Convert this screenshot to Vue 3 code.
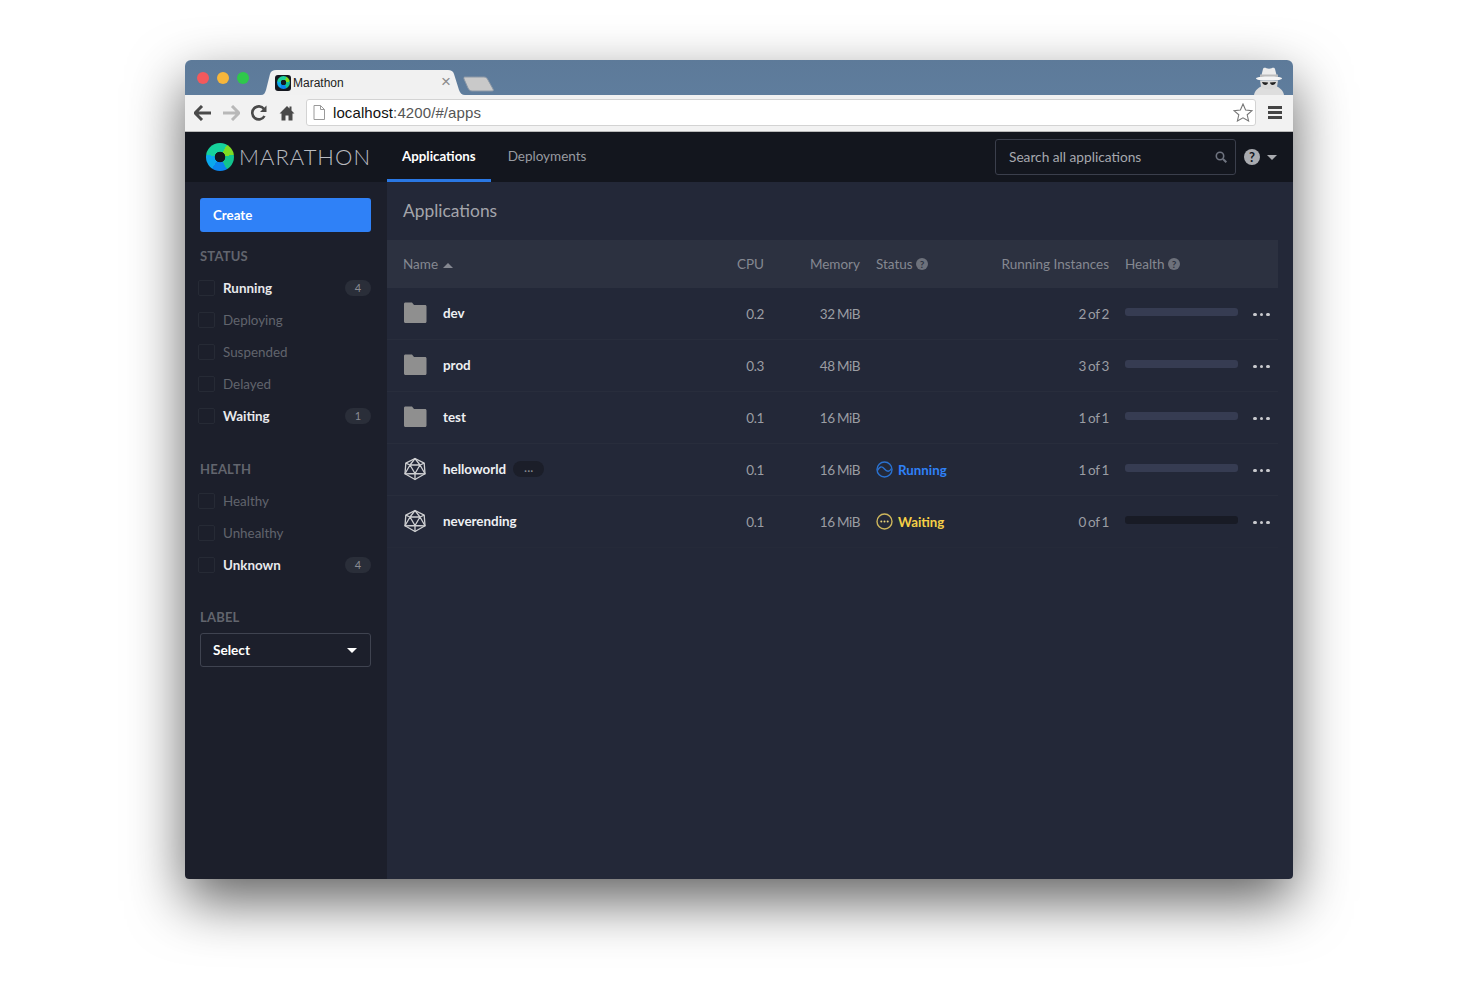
<script setup>
const statusFilters = [
  { label: 'Running', count: 4 },
  { label: 'Deploying' },
  { label: 'Suspended' },
  { label: 'Delayed' },
  { label: 'Waiting', count: 1 }
]

const healthFilters = [
  { label: 'Healthy' },
  { label: 'Unhealthy' },
  { label: 'Unknown', count: 4 }
]

const apps = [
  { name: 'dev', type: 'group', cpu: '0.2', mem: '32 MiB', running: '2 of 2', health: 'ok' },
  { name: 'prod', type: 'group', cpu: '0.3', mem: '48 MiB', running: '3 of 3', health: 'ok' },
  { name: 'test', type: 'group', cpu: '0.1', mem: '16 MiB', running: '1 of 1', health: 'ok' },
  { name: 'helloworld', type: 'app', labels: true, cpu: '0.1', mem: '16 MiB', status: 'Running', running: '1 of 1', health: 'ok' },
  { name: 'neverending', type: 'app', cpu: '0.1', mem: '16 MiB', status: 'Waiting', running: '0 of 1', health: 'none' }
]
</script>

<template>
  <div class="page">
    <div class="window">
      <!-- browser chrome -->
      <div class="tabstrip">
        <div class="lights">
          <span class="light red"></span>
          <span class="light yellow"></span>
          <span class="light green"></span>
        </div>
        <div class="tab">
          <svg class="tab-bg" width="204" height="25" viewBox="0 0 204 25">
            <path d="M0 25 C3 25 4 23 5 20 L9 4 C10 1 12 0 15 0 L187 0 C190 0 192 1 193 4 L198 20 C199 23 201 25 204 25 Z" fill="#f1f1f1" />
          </svg>
          <span class="favicon"><span class="favicon-ring"></span></span>
          <span class="tab-title">Marathon</span>
          <span class="tab-close">×</span>
        </div>
        <svg class="newtab" width="32" height="16" viewBox="0 0 32 16">
          <path d="M2 1 L21 1 C23 1 24 2 25 4 L30 13 C31 15 30 15 28 15 L9 15 C7 15 6 14 5 12 L1 3 C0.6 1.6 1 1 2 1 Z" fill="#c9c9c9" stroke="#8c98a6" stroke-width="1" />
        </svg>
        <svg class="incognito" width="32" height="30" viewBox="0 0 32 30">
          <path d="M1 30 C2 25 5 23 9 21 L23 21 C27 23 30 25 31 30 Z" fill="#dedede" />
          <path d="M8 12 L10 4 C10.4 2.4 12 2.6 13.5 3.2 C15 3.8 17 3.8 18.5 3.2 C20 2.6 21.6 2.4 22 4 L24 12 Z" fill="#ececec" />
          <path d="M7 9.5 L25 9.5 L25 12 L7 12 Z" fill="#bdbdbd" />
          <path d="M3 13 C7 11 25 11 29 13 C29 15 25 15.5 16 15.5 C7 15.5 3 15 3 13 Z" fill="#f4f4f4" />
          <path d="M7 15.5 L25 15.5 L24 22 C21 25 11 25 8 22 Z" fill="#d9d9d9" />
          <path d="M9 17 L15 17.5 C15 20.5 10 21 9 17 Z M23 17 L17 17.5 C17 20.5 22 21 23 17 Z" fill="#222" />
        </svg>
      </div>
      <div class="toolbar">
        <span class="tool"><svg width="18" height="16" viewBox="0 0 18 16"><path d="M8 1 L1 8 L8 15 M2 8 L17 8" fill="none" stroke="#4a4a4a" stroke-width="3" /></svg></span>
        <span class="tool"><svg width="18" height="16" viewBox="0 0 18 16"><path d="M10 1 L17 8 L10 15 M16 8 L1 8" fill="none" stroke="#b8b8b8" stroke-width="3" /></svg></span>
        <span class="tool"><svg width="16" height="16" viewBox="0 0 16 16"><path d="M13.5 11 A6.5 6.5 0 1 1 13 4" fill="none" stroke="#4a4a4a" stroke-width="2.6" /><path d="M15.5 0.5 L15.5 7 L9 7 Z" fill="#4a4a4a" /></svg></span>
        <span class="tool"><svg width="16" height="16" viewBox="0 0 16 16"><path d="M8 1 L0.5 8.5 L2.5 8.5 L2.5 15.5 L6.5 15.5 L6.5 10.5 L9.5 10.5 L9.5 15.5 L13.5 15.5 L13.5 8.5 L15.5 8.5 L12.5 5.5 L12.5 1.5 L10.5 1.5 L10.5 3.5 Z" fill="#4a4a4a" /></svg></span>
        <div class="omnibox">
          <svg width="12" height="15" viewBox="0 0 12 15"><path d="M1 .5 L7.5 .5 L11.5 4.5 L11.5 14.5 L1 14.5 Z M7.5 .5 L7.5 4.5 L11.5 4.5" fill="#fff" stroke="#9a9a9a" /></svg>
          <span class="url"><span class="host">localhost</span>:4200/#/apps</span>
          <svg class="star" width="20" height="19" viewBox="0 0 20 19"><path d="M10 1 L12.6 7 L19 7.6 L14.2 11.8 L15.6 18 L10 14.8 L4.4 18 L5.8 11.8 L1 7.6 L7.4 7 Z" fill="#fff" stroke="#777" stroke-width="1.1" /></svg>
        </div>
        <div class="menu-icon"><span></span><span></span><span></span></div>
      </div>

      <!-- marathon top bar -->
      <header class="topbar">
        <div class="brand">
          <span class="logo"></span>
          <span class="wordmark">MARATHON</span>
        </div>
        <nav class="nav">
          <a class="nav-item active">Applications</a>
          <a class="nav-item">Deployments</a>
        </nav>
        <div class="search">
          <span>Search all applications</span>
          <svg width="12" height="12" viewBox="0 0 12 12"><circle cx="5" cy="5" r="3.7" fill="none" stroke="#6f7480" stroke-width="1.6" /><path d="M8 8 L11.3 11.3" stroke="#6f7480" stroke-width="2" /></svg>
        </div>
        <div class="help">
          <span class="help-circle">?</span>
          <span class="caret"></span>
        </div>
      </header>

      <div class="body">
        <aside class="sidebar">
          <button class="create">Create</button>

          <h4 class="side-title">STATUS</h4>
          <ul class="filters">
            <li v-for="f in statusFilters" :key="f.label" :class="{ on: f.count }">
              <span class="check"></span>
              <span class="filter-label">{{ f.label }}</span>
              <span v-if="f.count" class="count">{{ f.count }}</span>
            </li>
          </ul>

          <h4 class="side-title health-title">HEALTH</h4>
          <ul class="filters">
            <li v-for="f in healthFilters" :key="f.label" :class="{ on: f.count }">
              <span class="check"></span>
              <span class="filter-label">{{ f.label }}</span>
              <span v-if="f.count" class="count">{{ f.count }}</span>
            </li>
          </ul>

          <h4 class="side-title label-title">LABEL</h4>
          <div class="select">
            <span>Select</span>
            <span class="select-caret"></span>
          </div>
        </aside>

        <main class="main">
          <h2 class="heading">Applications</h2>

          <div class="table">
            <div class="row head">
              <div class="name-head">Name <span class="sort"></span></div>
              <div class="num">CPU</div>
              <div class="num">Memory</div>
              <div class="status-cell">Status <span class="q">?</span></div>
              <div class="num">Running Instances</div>
              <div class="health-cell">Health <span class="q">?</span></div>
              <div></div>
            </div>

            <div v-for="app in apps" :key="app.name" class="row item">
              <div class="name">
                <svg v-if="app.type === 'group'" class="row-icon" width="24" height="21" viewBox="0 0 24 21">
                  <path d="M1 2 C1 1 1.6 .5 2.5 .5 L9 .5 L11 3 L22 3 C23 3 23.5 3.6 23.5 4.5 L23.5 19.5 C23.5 20.4 23 21 22 21 L2.5 21 C1.6 21 1 20.4 1 19.5 Z" fill="#8f8f8f" />
                </svg>
                <svg v-else class="row-icon" width="24" height="24" viewBox="0 0 24 24" fill="none" stroke="#cfd0d2" stroke-width="1.3" stroke-linejoin="round">
                  <path d="M12 1.5 L21.2 6.2 L22 16.8 L12 22.5 L2 16.8 L2.8 6.2 Z" />
                  <path d="M12 1.5 L7 8 L2.8 6.2 M12 1.5 L17 8 L21.2 6.2 M7 8 L17 8 L12 16.5 Z M7 8 L2 16.8 L12 16.5 L22 16.8 L17 8 M12 16.5 L12 22.5" />
                </svg>
                <span class="app-name">{{ app.name }}</span>
                <span v-if="app.labels" class="more-labels">...</span>
              </div>
              <div class="num value">{{ app.cpu }}</div>
              <div class="num value">{{ app.mem }}</div>
              <div class="status-cell">
                <span v-if="app.status === 'Running'" class="state running">
                  <svg width="17" height="17" viewBox="0 0 17 17" fill="none" stroke="#2a71cf" stroke-width="1.4">
                    <circle cx="8.5" cy="8.5" r="7.5" />
                    <path d="M1.5 9.5 C3.5 5 6 5 8.5 8 C11 11 13.5 11 15.5 7.5" />
                  </svg>
                  Running
                </span>
                <span v-else-if="app.status === 'Waiting'" class="state waiting">
                  <svg width="17" height="17" viewBox="0 0 17 17">
                    <circle cx="8.5" cy="8.5" r="7.5" fill="none" stroke="#cdb65c" stroke-width="1.4" />
                    <circle cx="5.3" cy="8.5" r="1" fill="#e8d27a" />
                    <circle cx="8.5" cy="8.5" r="1" fill="#e8d27a" />
                    <circle cx="11.7" cy="8.5" r="1" fill="#e8d27a" />
                  </svg>
                  Waiting
                </span>
              </div>
              <div class="num value">{{ app.running }}</div>
              <div class="health-cell">
                <div class="bar" :class="app.health"></div>
              </div>
              <div class="dots"><span></span><span></span><span></span></div>
            </div>
          </div>
        </main>
      </div>
    </div>
  </div>
</template>

<style>
html, body {
  margin: 0;
  background: #fff;
}
</style>

<style scoped>
* {
  box-sizing: border-box;
}

.page {
  width: 1480px;
  height: 987px;
  padding: 60px 187px 0 185px;
  overflow: hidden;
  font-family: Lato, "Noto Sans", sans-serif;
}

.window {
  height: 819px;
  display: flex;
  flex-direction: column;
  border-radius: 6px 6px 4px 4px;
  overflow: hidden;
  box-shadow: 0 22px 55px rgba(0, 0, 0, 0.62);
}

/* ---------- browser chrome ---------- */
.tabstrip {
  height: 35px;
  flex: none;
  display: flex;
  align-items: flex-end;
  background: linear-gradient(180deg, #5d7a99, #5f7d9d);
  font-family: "Liberation Sans", Arial, sans-serif;
}

.lights {
  display: flex;
  gap: 8px;
  padding: 0 0 11px 12px;
}

.light {
  width: 12px;
  height: 12px;
  border-radius: 50%;
}

.red { background: #f3595c; }
.yellow { background: #f7b63b; }
.green { background: #2fc84b; }

.tab {
  position: relative;
  width: 204px;
  height: 25px;
  margin-left: 12px;
  display: flex;
  align-items: center;
  padding-left: 14px;
  font-size: 12px;
  color: #222;
}

.tab-bg {
  position: absolute;
  left: 0;
  top: 0;
}

.favicon {
  position: relative;
  width: 16px;
  height: 16px;
  border-radius: 3px;
  background: #15181f;
  display: flex;
  align-items: center;
  justify-content: center;
}

.favicon-ring {
  width: 13px;
  height: 13px;
  border-radius: 50%;
  background: radial-gradient(circle at 50% 50%, #15181f 0 2.6px, transparent 3px),
    conic-gradient(#1fd09c 0 30deg, #7fdc24 30deg 80deg, #12c48e 80deg 150deg, #0b84ee 150deg 215deg, #0aa8ee 215deg 280deg, #1fd09c 280deg 360deg);
}

.tab-title {
  position: relative;
  margin-left: 2px;
}

.tab-close {
  position: absolute;
  left: 180px;
  top: 3px;
  font-size: 17px;
  line-height: 18px;
  color: #8b8b8b;
}

.newtab {
  margin: 0 0 3px -2px;
}

.incognito {
  margin-left: auto;
  margin-right: 8px;
}

.toolbar {
  height: 37px;
  flex: none;
  display: flex;
  align-items: center;
  gap: 10px;
  padding: 0 11px 1px 9px;
  background: #f2f2f2;
  border-bottom: 1px solid #b9b9b9;
}

.tool {
  width: 18px;
  display: flex;
  justify-content: center;
}

.omnibox {
  flex: 1;
  height: 27px;
  display: flex;
  align-items: center;
  gap: 8px;
  padding: 0 2px 0 6px;
  background: #fff;
  border: 1px solid #d3d3d3;
  border-radius: 3px;
  font-family: "Liberation Sans", Arial, sans-serif;
  font-size: 15px;
  letter-spacing: 0.1px;
  color: #555;
}

.url {
  flex: 1;
}

.host {
  color: #111;
}

.menu-icon {
  width: 14px;
  margin-left: 2px;
  display: flex;
  flex-direction: column;
  gap: 2px;
}

.menu-icon span {
  height: 3px;
  background: #444;
}

/* ---------- top bar ---------- */
.topbar {
  height: 50px;
  flex: none;
  display: flex;
  align-items: center;
  background: #13161e;
  color: #fff;
}

.brand {
  width: 202px;
  display: flex;
  align-items: center;
  padding-left: 21px;
  gap: 5px;
}

.logo {
  width: 28px;
  height: 28px;
  border-radius: 50%;
  background: radial-gradient(circle at 50% 50%, #13161e 0 5px, transparent 5.6px),
    conic-gradient(#16d29c 0 30deg, #7fdc24 30deg 80deg, #12c48e 80deg 150deg, #0b84ee 150deg 215deg, #0aa8ee 215deg 280deg, #16d29c 280deg 360deg);
}

.wordmark {
  padding-bottom: 2px;
  font-size: 22px;
  font-weight: 300;
  letter-spacing: 1px;
  color: #b9bbc0;
}

.nav {
  flex: 1;
  display: flex;
  align-self: stretch;
}

.nav-item {
  display: flex;
  align-items: center;
  padding: 0 15px 0;
  font-size: 13.5px;
  color: #989ba1;
  border-bottom: 3px solid transparent;
}

.nav-item + .nav-item {
  padding-left: 17px;
}

.nav-item.active {
  color: #fff;
  font-size: 13.3px;
  font-weight: 700;
  border-bottom-color: #2a78e4;
}

.search {
  width: 241px;
  height: 36px;
  display: flex;
  align-items: center;
  justify-content: space-between;
  padding: 0 8px 1px 13px;
  border: 1px solid #3b3f4c;
  border-radius: 3px;
  font-size: 13.7px;
  color: #a6a8ae;
}

.help {
  width: 57px;
  display: flex;
  align-items: center;
  padding-left: 8px;
  gap: 7px;
}

.help-circle {
  width: 16px;
  height: 16px;
  border-radius: 50%;
  background: #a9abb0;
  color: #13161e;
  font-size: 13px;
  font-weight: 700;
  line-height: 16px;
  text-align: center;
}

.caret {
  border: 5px solid transparent;
  border-top-color: #a9abb0;
  border-bottom-width: 0;
}

/* ---------- sidebar ---------- */
.body {
  flex: 1;
  display: flex;
  min-height: 0;
}

.sidebar {
  width: 202px;
  flex: none;
  padding: 16px 16px 0 15px;
  background: #1c1f2b;
}

.create {
  display: block;
  width: 100%;
  height: 34px;
  padding: 0 13px;
  border: none;
  border-radius: 3px;
  background: #2f81f7;
  color: #fff;
  font-family: inherit;
  font-size: 13.3px;
  font-weight: 700;
  text-align: left;
}

.side-title {
  margin: 15px 0 0;
  font-size: 13px;
  line-height: 18px;
  font-weight: 700;
  letter-spacing: 0.2px;
  color: #62656e;
}

.health-title {
  margin-top: 28px;
}

.label-title {
  margin-top: 27px;
}

.filters {
  list-style: none;
  margin: 7px 0 0;
  padding: 0;
}

.filters li {
  height: 32px;
  display: flex;
  align-items: center;
  font-size: 13.4px;
  color: #61646d;
}

.filters li.on {
  color: #e8e9ec;
  font-weight: 700;
}

.check {
  width: 17px;
  height: 16px;
  margin-right: 8px;
  margin-left: -2px;
  border: 1px solid #262a35;
  border-radius: 2px;
}

.filter-label {
  flex: 1;
}

.count {
  width: 26px;
  height: 16px;
  border-radius: 8px;
  background: #2a2e39;
  color: #8a8c93;
  font-size: 11px;
  font-weight: 400;
  line-height: 16px;
  text-align: center;
}

.select {
  height: 34px;
  margin-top: 7px;
  display: flex;
  align-items: center;
  justify-content: space-between;
  padding: 0 13px 0 12px;
  border: 1px solid #3f4350;
  border-radius: 3px;
  color: #fff;
  font-size: 13.6px;
  font-weight: 700;
}

.select-caret {
  border: 5px solid transparent;
  border-top-color: #fff;
  border-bottom-width: 0;
}

/* ---------- main ---------- */
.main {
  flex: 1;
  min-width: 0;
  padding: 0 15px 0 0;
  background: #232838;
}

.heading {
  margin: 0;
  height: 58px;
  padding: 17px 0 0 16px;
  font-size: 17.4px;
  line-height: 24px;
  font-weight: 400;
  color: #a3a5ab;
}

.row {
  display: grid;
  grid-template-columns: 1fr 64px 96px 140px 109px 129px 40px;
  align-items: center;
  padding-left: 16px;
  font-size: 13.5px;
  color: #9b9da3;
  white-space: nowrap;
}

.head {
  height: 48px;
  background: #2c3140;
  color: #858891;
}

.item {
  height: 52px;
  border-bottom: 1px solid #282d3c;
}

.item:last-child {
  border-bottom-color: #252a39;
}

.num {
  text-align: right;
}

.value {
  letter-spacing: -0.4px;
  word-spacing: -0.8px;
}

.status-cell,
.health-cell {
  padding-left: 16px;
}

.name-head {
  display: flex;
  align-items: center;
  gap: 5px;
}

.sort {
  border: 5px solid transparent;
  border-bottom-color: #858891;
  border-top-width: 0;
  margin-top: 3px;
}

.q {
  display: inline-block;
  width: 12px;
  height: 12px;
  border-radius: 50%;
  background: #6d717b;
  color: #2c3140;
  font-size: 10px;
  font-weight: 700;
  line-height: 12px;
  text-align: center;
  vertical-align: 1px;
}

.name {
  display: flex;
  align-items: center;
  margin-bottom: 2px;
}

.row-icon {
  flex: none;
  margin-right: 16px;
}

.app-name {
  color: #eef0f3;
  font-size: 13.4px;
  font-weight: 700;
}

.more-labels {
  width: 31px;
  height: 16px;
  margin-left: 7px;
  border-radius: 8px;
  background: #1b1e29;
  color: #8a8c93;
  font-size: 13px;
  line-height: 13px;
  text-align: center;
}

.state {
  display: flex;
  align-items: center;
  gap: 5px;
  font-size: 13.3px;
  font-weight: 700;
}

.running { color: #2f81f7; }
.waiting { color: #f5cf47; }

.bar {
  width: 113px;
  height: 8px;
  margin-top: -4px;
  border-radius: 3px;
}

.bar.ok { background: #363c52; }
.bar.none { background: #181b25; }

.dots {
  display: flex;
  gap: 3px;
  padding-left: 15px;
  margin-top: 2px;
}

.dots span {
  width: 3.5px;
  height: 3.5px;
  border-radius: 50%;
  background: #c9cace;
}
</style>
